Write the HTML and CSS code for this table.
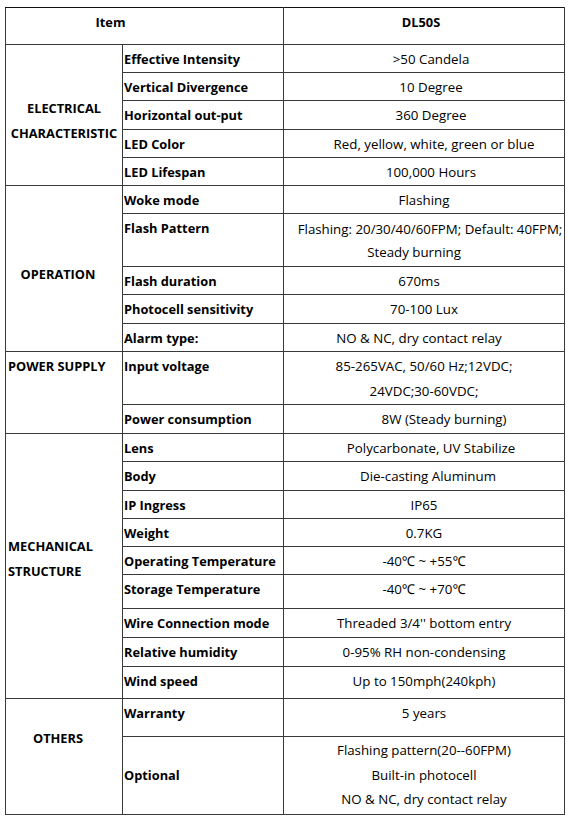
FILE: index.html
```html
<!DOCTYPE html>
<html>
<head>
<meta charset="utf-8">
<link rel="stylesheet" href="styles.css">
</head>
<body>
<table class="spec">
  <colgroup><col class="c1"><col class="c2"><col class="c3"></colgroup>
  <tr class="h37">
    <td colspan="2" class="hd item">Item</td>
    <td class="hd model">DL50S</td>
  </tr>
  <tr class="h28">
    <td rowspan="5" class="grp g-elec">ELECTRICAL<br>CHARACTERISTIC</td>
    <td class="lbl">Effective Intensity</td><td class="val sr">&gt;50 Candela</td>
  </tr>
  <tr class="h28"><td class="lbl">Vertical Divergence</td><td class="val sr">10 Degree</td></tr>
  <tr class="h29"><td class="lbl">Horizontal out-put</td><td class="val sr">360 Degree</td></tr>
  <tr class="h28"><td class="lbl">LED Color</td><td class="val sr3">Red, yellow, white, green or blue</td></tr>
  <tr class="h28"><td class="lbl">LED Lifespan</td><td class="val sr">100,000 Hours</td></tr>

  <tr class="h28">
    <td rowspan="5" class="grp g-op">OPERATION</td>
    <td class="lbl">Woke mode</td><td class="val">Flashing</td>
  </tr>
  <tr class="h53"><td class="lbl">Flash Pattern</td><td class="val fp">Flashing: 20/30/40/60FPM; Default: 40FPM;<br><span class="shift-l">Steady burning</span></td></tr>
  <tr class="h28"><td class="lbl">Flash duration</td><td class="val sl">670ms</td></tr>
  <tr class="h29"><td class="lbl">Photocell sensitivity</td><td class="val">70-100 Lux</td></tr>
  <tr class="h28"><td class="lbl">Alarm type:</td><td class="val sl">NO &amp; NC, dry contact relay</td></tr>

  <tr class="h52">
    <td rowspan="2" class="grp g-pow">POWER SUPPLY</td>
    <td class="lbl">Input voltage</td><td class="val multi">85-265VAC, 50/60 Hz;12VDC;<br>24VDC;30-60VDC;</td>
  </tr>
  <tr class="h29"><td class="lbl">Power consumption</td><td class="val sr2">8W (Steady burning)</td></tr>

  <tr class="h28">
    <td rowspan="9" class="grp g-mech">MECHANICAL<br>STRUCTURE</td>
    <td class="lbl">Lens</td><td class="val sr">Polycarbonate, UV Stabilize</td>
  </tr>
  <tr class="h29"><td class="lbl">Body</td><td class="val sr4">Die-casting Aluminum</td></tr>
  <tr class="h28"><td class="lbl">IP Ingress</td><td class="val">IP65</td></tr>
  <tr class="h28"><td class="lbl">Weight</td><td class="val">0.7KG</td></tr>
  <tr class="h28"><td class="lbl">Operating Temperature</td><td class="val">-40℃ ~ +55℃</td></tr>
  <tr class="h34"><td class="lbl">Storage Temperature</td><td class="val">-40℃ ~ +70℃</td></tr>
  <tr class="h29"><td class="lbl">Wire Connection mode</td><td class="val">Threaded 3/4'' bottom entry</td></tr>
  <tr class="h29"><td class="lbl">Relative humidity</td><td class="val">0-95% RH non-condensing</td></tr>
  <tr class="h32"><td class="lbl">Wind speed</td><td class="val">Up to 150mph(240kph)</td></tr>

  <tr class="h38">
    <td rowspan="2" class="grp g-oth">OTHERS</td>
    <td class="lbl">Warranty</td><td class="val">5 years</td>
  </tr>
  <tr class="h78"><td class="lbl mid">Optional</td><td class="val opt">Flashing pattern(20--60FPM)<br>Built-in photocell<br>NO &amp; NC, dry contact relay</td></tr>
</table>
</body>
</html>
```
FILE: styles.css
```css
html, body {
  margin: 0;
  padding: 0;
  background: #fff;
}
body {
  padding: 7px 0 0 5px;
  font-family: "Open Sans", "Noto Sans", sans-serif;
  font-size: 13.3px;
  color: #000;
}
.spec {
  border-collapse: collapse;
  table-layout: fixed;
  width: 559px;
}
.c1 { width: 117px; }
.c2 { width: 161px; }
.c3 { width: 281px; }
td {
  border: 1px solid #3a3a3a;
  padding: 2px 0 0 0;
  vertical-align: top;
  line-height: 24px;
  white-space: nowrap;
  overflow: hidden;
}
.h28 { height: 28px; }
.h29 { height: 29px; }
.h32 { height: 32px; }
.h34 { height: 34px; }
.h37 { height: 37px; }
.h38 { height: 38px; }
.h52 { height: 52px; }
.h53 { height: 53px; }
.h78 { height: 78px; }

.hd {
  font-weight: 700;
  font-size: 12.8px;
  text-align: center;
  line-height: 29px;
  padding-top: 0;
  border-top-color: #111;
}
.item { padding-right: 68px; }
.model { padding-right: 6px; }

.grp {
  font-weight: 700;
  font-size: 12.8px;
  line-height: 25px;
  padding-top: 0;
}
.g-elec { text-align: center; padding-top: 51px; }
.g-op { text-align: center; padding: 76px 12px 0 0; }
.g-pow { text-align: left; padding: 2px 0 0 2px; line-height: 24px; }
.g-mech { text-align: left; padding: 100px 0 0 2px; }
.g-oth { text-align: center; padding: 27px 12px 0 0; }

.lbl {
  font-weight: 700;
  font-size: 12.8px;
  padding-left: 1px;
}
.lbl.mid { vertical-align: middle; padding-top: 0; }

.val { text-align: center; }
.val.sr { padding-left: 14px; }
.val.sr3 { padding-left: 20px; }
.val.sr4 { padding-left: 8px; }
.val.sr2 { padding-left: 40px; }
.val.sl { padding-right: 10px; }
.val.multi { line-height: 25px; padding-top: 1.5px; }
.val.fp { line-height: 23px; padding-top: 4px; padding-left: 12px; }
.shift-l { display: inline-block; margin-right: 32px; }
.val.opt { vertical-align: middle; line-height: 24.5px; padding-top: 0; }
```
